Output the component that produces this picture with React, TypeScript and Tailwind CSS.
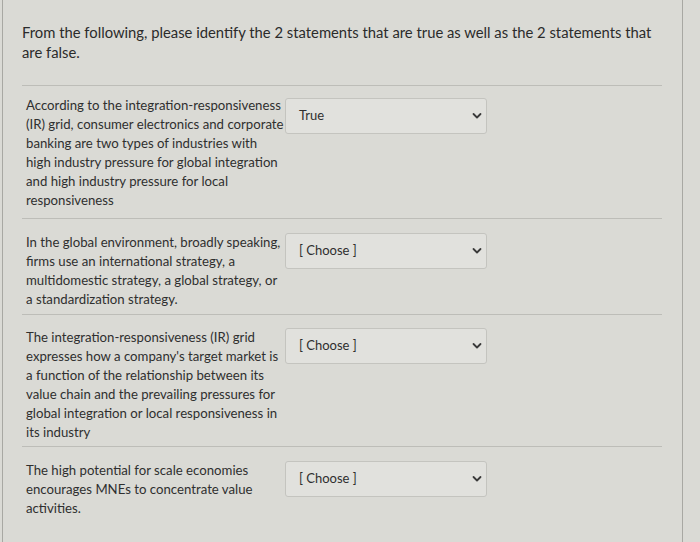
import React from "react";

function Chevron() {
  return (
    <svg width="10" height="8" viewBox="0 0 10 8" className="shrink-0">
      <path d="M1.5 2 L5 5.5 L8.5 2" fill="none" stroke="#3a3a3a" strokeWidth="1.8" strokeLinecap="round" strokeLinejoin="round" />
    </svg>
  );
}

function Select({ value }: { value: string }) {
  return (
    <div className="w-[202px] h-[36px] shrink-0 rounded-[3px] border border-[#c4c4bf] bg-[#e1e1dd] flex items-center justify-between pl-[13px] pr-[4px]">
      <span className="text-[13px] text-[#2f2f2f]">{value}</span>
      <Chevron />
    </div>
  );
}

function Row({ text, value, pt, pb, sm = "" }: { text: string; value: string; pt: string; pb: string; sm?: string }) {
  return (
    <div className={`flex items-start pl-[4px] ${pt} ${pb}`}>
      <div className="w-[258px] text-[13.2px] leading-[19px] text-[#2f2f2f]">{text}</div>
      <div className={`ml-[1px] ${sm}`}>
        <Select value={value} />
      </div>
    </div>
  );
}

export default function App() {
  return (
    <div className="w-[700px] h-[542px] overflow-hidden bg-[#dadad5]" style={{ fontFamily: "Lato, 'Open Sans', sans-serif" }}>
      <div className="ml-[2px] w-[681px] h-[542px] border-l border-r border-[#a8a8a3]">
        <div className="ml-[19px] w-[640px]">
          <div className="pt-[22px] pb-[23px] text-[14.8px] leading-[20px] text-[#2b2b2b]">
            From the following, please identify the 2 statements that are true as well as the 2 statements that are false.
          </div>
          <div className="h-px bg-[#bdbdb8]" />
          <Row
            pt="pt-[10px]"
            pb="pb-[8px]"
            sm="mt-[2px]"
            value="True"
            text="According to the integration-responsiveness (IR) grid, consumer electronics and corporate banking are two types of industries with high industry pressure for global integration and high industry pressure for local responsiveness"
          />
          <div className="h-px bg-[#bdbdb8]" />
          <Row
            pt="pt-[14px]"
            pb="pb-[5px]"
            value="[ Choose ]"
            text="In the global environment, broadly speaking, firms use an international strategy, a multidomestic strategy, a global strategy, or a standardization strategy."
          />
          <div className="h-px bg-[#bdbdb8]" />
          <Row
            pt="pt-[13px]"
            pb="pb-[4px]"
            value="[ Choose ]"
            text="The integration-responsiveness (IR) grid expresses how a company's target market is a function of the relationship between its value chain and the prevailing pressures for global integration or local responsiveness in its industry"
          />
          <div className="h-px bg-[#bdbdb8]" />
          <Row
            pt="pt-[14px]"
            pb="pb-[9px]"
            value="[ Choose ]"
            text="The high potential for scale economies encourages MNEs to concentrate value activities."
          />
        </div>
      </div>
    </div>
  );
}
